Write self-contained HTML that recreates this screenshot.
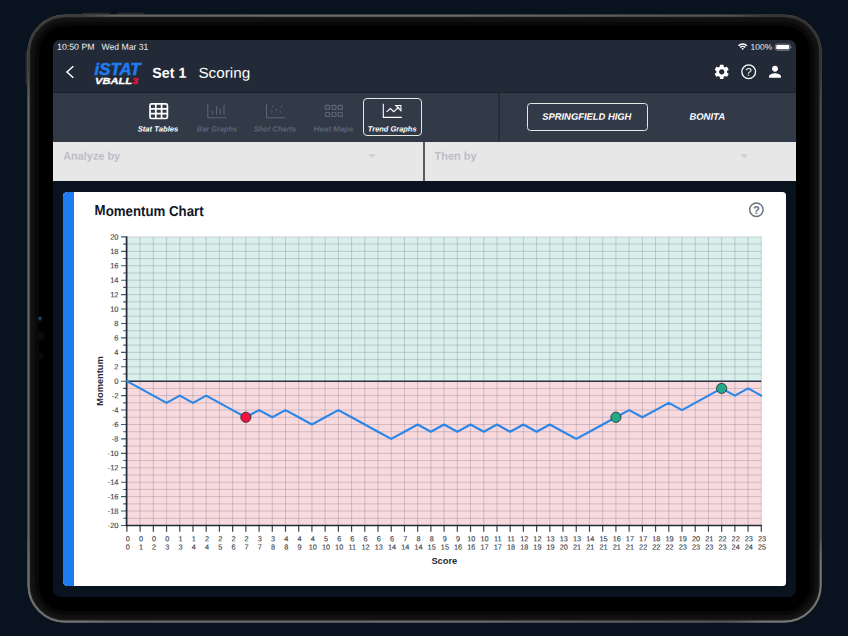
<!DOCTYPE html>
<html lang="en"><head><meta charset="utf-8"><title>iStat VBall 3 - Momentum Chart</title>
<style>
*{box-sizing:border-box;margin:0;padding:0}
html,body{width:848px;height:636px;overflow:hidden;background:#09121f;font-family:"Liberation Sans",sans-serif}
.abs{position:absolute}
#stage{position:relative;width:848px;height:636px;background:#09121f;overflow:hidden}
.btn{position:absolute;background:#2b2b2d;border-radius:1.5px}
#device{position:absolute;left:28px;top:15px;width:794px;height:607px;border-radius:37px;background:linear-gradient(135deg,#2c2c2e 0%,#3a3a3c 40%,#6a6a6c 75%,#7a7a7c 100%)}
#bezel{position:absolute;left:1.6px;top:1.6px;right:1.6px;bottom:1.6px;border-radius:35.5px;background:#000;box-shadow:inset 0 0 9px 3px rgba(70,70,72,0.55)}
#bezel2{position:absolute;left:10px;top:10px;right:10px;bottom:10px;border-radius:27px;background:#000;box-shadow:0 0 6px 3px #000}
#screen{position:absolute;left:52.7px;top:39.8px;width:743px;height:557px;border-radius:7px;background:#09131f;overflow:hidden}
#hdr{position:absolute;left:0;top:0;width:743px;height:52.6px;background:#232a37}
#hdrline{position:absolute;left:0;top:52.2px;width:743px;height:1px;background:#19212d}
#tb{position:absolute;left:0;top:53.1px;width:743px;height:48.9px;background:#323a48}
#flt{position:absolute;left:0;top:102px;width:743px;height:39.1px;background:#e7e7e7}
.st{position:absolute;color:#eef0f3;font-size:8.6px;line-height:10px;white-space:nowrap}
.ttl{position:absolute;color:#fff;font-size:14px;line-height:16px;white-space:nowrap}
.tl{position:absolute;font-size:7.6px;line-height:9px;font-weight:bold;font-style:italic;white-space:nowrap;text-align:center;transform:translateX(-50%)}
.on{color:#fff}.off{color:#566070}
.team{position:absolute;color:#fff;font-size:9.3px;font-weight:bold;font-style:italic;line-height:11px;white-space:nowrap;transform:translateX(-50%)}
.fl{position:absolute;color:#bdc0c6;font-size:10.9px;font-weight:bold;line-height:13px;white-space:nowrap}
#card{position:absolute;left:10.7px;top:152.2px;width:722.8px;height:394.2px;background:#fff;border-radius:4.5px 3.5px 3.5px 4.5px;overflow:hidden}
#band{position:absolute;left:0;top:0;width:10.6px;height:100%;background:#1f7cf0}
#ct{position:absolute;left:31.9px;top:10.6px;font-size:14.5px;font-weight:bold;color:#111827;line-height:17px;white-space:nowrap}
svg{position:absolute;left:0;top:0;overflow:visible}
.yl text{font-size:7.5px;fill:#363e4b;stroke:#363e4b;stroke-width:0.12px;text-anchor:end}
.xl text{font-size:7.3px;fill:#363e4b;stroke:#363e4b;stroke-width:0.12px;text-anchor:middle}
.axt{font-size:9.3px;font-weight:bold;fill:#1f2937}
</style></head><body>
<div id="stage">
<svg class="dev" width="848" height="636" viewBox="0 0 848 636">
<defs>
<linearGradient id="rimg" x1="0" y1="0" x2="1" y2="0"><stop offset="0" stop-color="#646464"/><stop offset="0.5" stop-color="#6c6c6c"/><stop offset="1" stop-color="#4c4c4c"/></linearGradient>
<linearGradient id="tlg" x1="0" y1="0" x2="1" y2="0"><stop offset="0" stop-color="#3b3b3b" stop-opacity="0"/><stop offset="0.25" stop-color="#3b3b3b" stop-opacity="1"/><stop offset="0.6" stop-color="#3b3b3b" stop-opacity="1"/><stop offset="1" stop-color="#3b3b3b" stop-opacity="0"/></linearGradient>
<clipPath id="devclip"><rect x="27.2" y="14.2" width="795" height="608.8" rx="38"/></clipPath>
<filter id="blur5" x="-5%" y="-5%" width="110%" height="110%"><feGaussianBlur stdDeviation="5.5"/></filter>
</defs>
<!-- hardware buttons -->
<rect x="82" y="12.8" width="28" height="4" rx="1.2" fill="#2c2c2e"/>
<rect x="117" y="12.8" width="28" height="4" rx="1.2" fill="#2c2c2e"/>
<rect x="25.6" y="51" width="4" height="34" rx="1.2" fill="#2c2c2e"/>
<!-- body -->
<rect x="27.2" y="14.2" width="795" height="608.8" rx="38" fill="#000"/>
<g clip-path="url(#devclip)">
<rect x="27.2" y="14.2" width="795" height="608.8" rx="38" fill="none" stroke="#242424" stroke-width="12" filter="url(#blur5)"/>
</g>
<rect x="28.500" y="15.700" width="792.2" height="606" rx="36.700" fill="none" stroke="url(#rimg)" stroke-width="2.300"/>
<!-- darker, thicker top corners -->
<path d="M28.700 100V52.600A36.700 36.700 0 0 1 65.400 15.900H120" fill="none" stroke="#3a3a3a" stroke-width="2.500" opacity="0.95" mask="url(#mtl)"/>
<path d="M820.500 100V52.600A36.700 36.700 0 0 0 783.800 15.900H730" fill="none" stroke="#343434" stroke-width="2.400" opacity="0.95" mask="url(#mtr)"/>
<defs>
<radialGradient id="rtl" cx="48" cy="35" r="70" gradientUnits="userSpaceOnUse"><stop offset="0.55" stop-color="#fff"/><stop offset="1" stop-color="#000"/></radialGradient>
<radialGradient id="rtr" cx="801" cy="35" r="70" gradientUnits="userSpaceOnUse"><stop offset="0.55" stop-color="#fff"/><stop offset="1" stop-color="#000"/></radialGradient>
<mask id="mtl" maskUnits="userSpaceOnUse" x="0" y="0" width="200" height="200"><rect x="0" y="0" width="200" height="200" fill="url(#rtl)"/></mask>
<mask id="mtr" maskUnits="userSpaceOnUse" x="650" y="0" width="198" height="200"><rect x="650" y="0" width="198" height="200" fill="url(#rtr)"/></mask>
</defs>
<path d="M28.500 540V585A36.700 36.700 0 0 0 65.200 621.700H120" fill="none" stroke="#6e6e6e" stroke-width="1.700" mask="url(#mbl)"/>
<path d="M820.700 540V585A36.700 36.700 0 0 1 784 621.700H730" fill="none" stroke="#767676" stroke-width="1.700" mask="url(#mbr)"/>
<defs>
<radialGradient id="rbl" cx="48" cy="602" r="75" gradientUnits="userSpaceOnUse"><stop offset="0.55" stop-color="#fff"/><stop offset="1" stop-color="#000"/></radialGradient>
<radialGradient id="rbr" cx="801" cy="602" r="75" gradientUnits="userSpaceOnUse"><stop offset="0.55" stop-color="#fff"/><stop offset="1" stop-color="#000"/></radialGradient>
<mask id="mbl" maskUnits="userSpaceOnUse" x="0" y="436" width="200" height="200"><rect x="0" y="436" width="200" height="200" fill="url(#rbl)"/></mask>
<mask id="mbr" maskUnits="userSpaceOnUse" x="650" y="436" width="198" height="200"><rect x="650" y="436" width="198" height="200" fill="url(#rbr)"/></mask>
</defs>
<!-- camera -->
<circle cx="40" cy="318.500" r="2.900" fill="#0c1418"/>
<circle cx="40" cy="318.500" r="1.150" fill="#1a6a86"/>
<circle cx="40" cy="336.500" r="4.600" fill="#0a0a0a"/>
<circle cx="40" cy="355.500" r="3.600" fill="#090909"/>
</svg>

<div id="screen">
 <div id="hdr"></div><div id="hdrline"></div><div id="tb"></div><div id="flt"></div>
 <div class="abs" style="left:310.3px;top:58.1px;width:59.1px;height:38.1px;border:1.7px solid #e6e6e6;border-radius:4px"></div>
 <div class="abs" style="left:445.8px;top:52.8px;width:1.2px;height:49.2px;background:#272e3a"></div>
 <div class="abs" style="left:474.1px;top:63.4px;width:120.9px;height:27.9px;border:1.7px solid #e6e6e6;border-radius:3.5px"></div>
 <div class="abs" style="left:370.7px;top:102px;width:1.3px;height:39.1px;background:#555a64"></div>
 <div id="card"><div id="band"></div></div>
</div>
<svg class="icons" width="848" height="636" viewBox="0 0 848 636">
<!-- back chevron -->
<path d="M73.3 66.3L67 72.05L73.3 77.8" fill="none" stroke="#fff" stroke-width="1.5" stroke-linecap="butt" stroke-linejoin="miter"/>
<!-- logo -->
<text x="94.6" y="74.7" font-size="16.9" font-weight="bold" font-style="italic" fill="#1f7cf0" stroke="#1f7cf0" stroke-width="0.55" textLength="46" lengthAdjust="spacingAndGlyphs">iSTAT</text>
<text x="95" y="83.9" font-size="9.8" font-weight="bold" font-style="italic" fill="#fff" stroke="#fff" stroke-width="0.3" textLength="43.2" lengthAdjust="spacingAndGlyphs">VBALL<tspan fill="#f0143c" stroke="#f0143c">3</tspan></text>
<!-- status icons: wifi -->
<g fill="none" stroke="#fff" stroke-linecap="butt">
<path d="M738.5 45.7A5.9 5.9 0 0 1 746.9 45.7" stroke-width="1.5"/>
<path d="M740.1 47.5A3.7 3.7 0 0 1 745.3 47.5" stroke-width="1.4"/>
</g>
<path d="M741.5 48.7A1.7 1.7 0 0 1 743.9 48.7L742.7 50.1Z" fill="#fff"/>
<!-- battery -->
<rect x="775.2" y="44.100" width="15" height="6.200" rx="1.900" fill="none" stroke="#8d939d" stroke-width="0.750"/>
<rect x="776.2" y="45.050" width="13" height="4.300" rx="1" fill="#fff"/>
<path d="M790.7 46.2v2.1c.6-.2.8-.6.8-1.05s-.2-.85-.8-1.050z" fill="#9aa0a8"/>
<!-- gear -->
<g transform="translate(712.8 62.9) scale(0.742)" fill="#fff">
<path d="M19.14 12.94c.04-.3.06-.61.06-.94 0-.32-.02-.64-.07-.94l2.030-1.580c.18-.14.23-.41.12-.61l-1.920-3.320c-.12-.22-.37-.29-.59-.22l-2.390.96c-.5-.38-1.030-.7-1.620-.94l-.36-2.540c-.04-.24-.24-.41-.48-.41h-3.840c-.24 0-.43.17-.47.41l-.36 2.540c-.59.24-1.130.57-1.620.94l-2.390-.96c-.22-.08-.47 0-.59.22L2.740 8.870c-.12.21-.08.47.12.61l2.030 1.580c-.05.3-.09.63-.09.94s.02.64.07.94l-2.030 1.580c-.18.14-.23.41-.12.61l1.920 3.320c.12.22.37.29.59.22l2.390-.96c.5.38 1.030.7 1.620.94l.36 2.540c.05.24.24.41.48.41h3.840c.24 0 .44-.17.47-.41l.36-2.540c.59-.24 1.130-.56 1.620-.94l2.390.96c.22.08.47 0 .59-.22l1.920-3.320c.12-.22.07-.47-.12-.61l-2.010-1.580zM12 15.600c-1.980 0-3.600-1.620-3.600-3.600s1.620-3.600 3.600-3.600 3.600 1.620 3.600 3.600-1.620 3.600-3.600 3.600z"/>
</g>
<!-- help -->
<circle cx="748.7" cy="71.8" r="6.85" fill="none" stroke="#fff" stroke-width="1.3"/>
<text x="748.7" y="75.800" font-size="11.200" transform="rotate(0.03 748.7 75.8)" fill="#fff" text-anchor="middle">?</text>
<!-- person -->
<g transform="translate(766.1 62.9) scale(0.742)" fill="#fff">
<path d="M12 12c2.210 0 4-1.790 4-4s-1.790-4-4-4-4 1.790-4 4 1.790 4 4 4zm0 2c-2.670 0-8 1.340-8 4v2h16v-2c0-2.660-5.330-4-8-4z"/>
</g>
<!-- stat tables -->
<g fill="none" stroke="#fff" stroke-width="1.7">
<rect x="150" y="103.9" width="17.4" height="14.6" rx="1.6"/>
<path d="M155.8 103.9v14.600M161.600 103.9v14.600M150 108.8h17.400M150 113.700h17.400"/>
</g>
<!-- bar graphs -->
<g fill="none" stroke="#5c6575" stroke-width="1">
<path d="M207.8 103.700V117.800H226.700"/>
<path d="M212.500 110.700V114.500M216.600 106V114.500M220.300 108.400V114.500M224 104.800V114.500" stroke-width="1.1"/>
</g>
<!-- shot charts -->
<path d="M266.500 103.700V117.800H285" fill="none" stroke="#5c6575" stroke-width="1"/>
<g fill="#5c6575">
<rect x="272.300" y="105.700" width="1.400" height="1.400"/><rect x="280.800" y="105.700" width="1.400" height="1.400"/><rect x="275.800" y="109.100" width="1.400" height="1.400"/><rect x="271.100" y="111.200" width="1.400" height="1.400"/><rect x="279.600" y="111.200" width="1.400" height="1.400"/>
</g>
<!-- heat maps -->
<g fill="none" stroke="#5c6575" stroke-width="1.2">
<rect x="325.500" y="105.400" width="4" height="4" rx="0.5"/><rect x="332" y="105.400" width="4" height="4" rx="0.5"/><rect x="338.300" y="105.400" width="4" height="4" rx="0.5"/>
<rect x="325.500" y="112.500" width="4" height="4" rx="0.5"/><rect x="332" y="112.500" width="4" height="4" rx="0.5"/><rect x="338.300" y="112.500" width="4" height="4" rx="0.5"/>
</g>
<!-- trend graphs -->
<g fill="none" stroke="#fff" stroke-width="1.1">
<path d="M383.300 103.700V117.400H401.900"/>
<path d="M386.600 111.900L390.400 108.600L393.700 111.700L399.200 106.900"/>
<path d="M395.800 105.500H400.900V110.600Z" stroke-width="1.1" stroke-linejoin="miter"/>
</g>
<!-- dropdown arrows -->
<path d="M367.900 154.300h8l-4 4.200z" fill="#cdd0d5"/>
<path d="M740.200 154.300h8l-4 4.200z" fill="#cdd0d5"/>
<!-- card help -->
<circle cx="756.400" cy="209.700" r="6.700" fill="none" stroke="#6b7280" stroke-width="1.450"/>
<text x="756.400" y="213.900" font-size="11.300" font-weight="bold" fill="#6b7280" text-anchor="middle" transform="rotate(0.03 756.4 213.9)">?</text>
</svg>

<svg class="txt" width="848" height="636" viewBox="0 0 848 636">
<text id="s1" x="57.0" y="49.8" font-size="8.6" font-weight="normal" font-style="normal" text-anchor="start" fill="#eef0f3" textLength="37.6" lengthAdjust="spacingAndGlyphs" transform="rotate(0.03 57.0 49.8)">10:50 PM</text>
<text id="s2" x="101.5" y="49.8" font-size="8.6" font-weight="normal" font-style="normal" text-anchor="start" fill="#eef0f3" textLength="46.8" lengthAdjust="spacingAndGlyphs" transform="rotate(0.03 101.5 49.8)">Wed Mar 31</text>
<text id="s3" x="772.2" y="49.8" font-size="8.3" font-weight="normal" font-style="normal" text-anchor="end" fill="#eef0f3" textLength="21.6" lengthAdjust="spacingAndGlyphs" transform="rotate(0.03 772.2 49.8)">100%</text>
<text id="t1" x="152.3" y="77.8" font-size="14.4" font-weight="bold" font-style="normal" text-anchor="start" fill="#fff" textLength="34" lengthAdjust="spacingAndGlyphs" transform="rotate(0.03 152.3 77.8)">Set 1</text>
<text id="t2" x="198.4" y="77.8" font-size="14.4" font-weight="normal" font-style="normal" text-anchor="start" fill="#fff" textLength="51.8" lengthAdjust="spacingAndGlyphs" transform="rotate(0.03 198.4 77.8)">Scoring</text>
<text id="l1" x="158" y="131.6" font-size="7.6" font-weight="bold" font-style="italic" text-anchor="middle" fill="#fff" textLength="40.6" lengthAdjust="spacingAndGlyphs" transform="rotate(0.03 158 131.6)">Stat Tables</text>
<text id="l2" x="216.9" y="131.6" font-size="7.6" font-weight="bold" font-style="italic" text-anchor="middle" fill="#5c6575" textLength="40.2" lengthAdjust="spacingAndGlyphs" transform="rotate(0.03 216.9 131.6)">Bar Graphs</text>
<text id="l3" x="275" y="131.6" font-size="7.6" font-weight="bold" font-style="italic" text-anchor="middle" fill="#5c6575" textLength="42.6" lengthAdjust="spacingAndGlyphs" transform="rotate(0.03 275 131.6)">Shot Charts</text>
<text id="l4" x="333.5" y="131.6" font-size="7.6" font-weight="bold" font-style="italic" text-anchor="middle" fill="#5c6575" textLength="39.6" lengthAdjust="spacingAndGlyphs" transform="rotate(0.03 333.5 131.6)">Heat Maps</text>
<text id="l5" x="392.2" y="131.6" font-size="7.6" font-weight="bold" font-style="italic" text-anchor="middle" fill="#fff" textLength="48.7" lengthAdjust="spacingAndGlyphs" transform="rotate(0.03 392.2 131.6)">Trend Graphs</text>
<text id="m1" x="586.8" y="119.8" font-size="9.3" font-weight="bold" font-style="italic" text-anchor="middle" fill="#fff" textLength="89.2" lengthAdjust="spacingAndGlyphs" transform="rotate(0.03 586.8 119.8)">SPRINGFIELD HIGH</text>
<text id="m2" x="707.2" y="119.8" font-size="9.3" font-weight="bold" font-style="italic" text-anchor="middle" fill="#fff" textLength="35.6" lengthAdjust="spacingAndGlyphs" transform="rotate(0.03 707.2 119.8)">BONITA</text>
<text id="f1" x="63.2" y="159.7" font-size="11.4" font-weight="bold" font-style="normal" text-anchor="start" fill="#bbbec7" textLength="57" lengthAdjust="spacingAndGlyphs" transform="rotate(0.03 63.2 159.7)">Analyze by</text>
<text id="f2" x="434.6" y="159.7" font-size="11.4" font-weight="bold" font-style="normal" text-anchor="start" fill="#bbbec7" textLength="42" lengthAdjust="spacingAndGlyphs" transform="rotate(0.03 434.6 159.7)">Then by</text>
<text id="c1" x="94.6" y="215.5" font-size="14.5" font-weight="bold" font-style="normal" text-anchor="start" fill="#111827" textLength="109" lengthAdjust="spacingAndGlyphs" transform="rotate(0.03 94.6 215.5)">Momentum Chart</text>
</svg>
<svg class="chart" width="848" height="636" viewBox="0 0 848 636">
<rect x="126.90" y="236.90" width="634.40" height="144.30" fill="#d9efeb"/>
<rect x="126.90" y="381.20" width="634.40" height="144.30" fill="#f7d9de"/>
<path d="M140.12 236.90V525.50M153.33 236.90V525.50M166.55 236.90V525.50M179.77 236.90V525.50M192.98 236.90V525.50M206.20 236.90V525.50M219.42 236.90V525.50M232.63 236.90V525.50M245.85 236.90V525.50M259.07 236.90V525.50M272.28 236.90V525.50M285.50 236.90V525.50M298.72 236.90V525.50M311.93 236.90V525.50M325.15 236.90V525.50M338.37 236.90V525.50M351.58 236.90V525.50M364.80 236.90V525.50M378.02 236.90V525.50M391.23 236.90V525.50M404.45 236.90V525.50M417.67 236.90V525.50M430.88 236.90V525.50M444.10 236.90V525.50M457.32 236.90V525.50M470.53 236.90V525.50M483.75 236.90V525.50M496.97 236.90V525.50M510.18 236.90V525.50M523.40 236.90V525.50M536.62 236.90V525.50M549.83 236.90V525.50M563.05 236.90V525.50M576.27 236.90V525.50M589.48 236.90V525.50M602.70 236.90V525.50M615.92 236.90V525.50M629.13 236.90V525.50M642.35 236.90V525.50M655.57 236.90V525.50M668.78 236.90V525.50M682.00 236.90V525.50M695.22 236.90V525.50M708.43 236.90V525.50M721.65 236.90V525.50M734.87 236.90V525.50M748.08 236.90V525.50M761.30 236.90V525.50M126.90 518.29H761.30M126.90 511.07H761.30M126.90 503.86H761.30M126.90 496.64H761.30M126.90 489.43H761.30M126.90 482.21H761.30M126.90 475.00H761.30M126.90 467.78H761.30M126.90 460.57H761.30M126.90 453.35H761.30M126.90 446.13H761.30M126.90 438.92H761.30M126.90 431.71H761.30M126.90 424.49H761.30M126.90 417.28H761.30M126.90 410.06H761.30M126.90 402.85H761.30M126.90 395.63H761.30M126.90 388.42H761.30M126.90 373.99H761.30M126.90 366.77H761.30M126.90 359.56H761.30M126.90 352.34H761.30M126.90 345.12H761.30M126.90 337.91H761.30M126.90 330.70H761.30M126.90 323.48H761.30M126.90 316.26H761.30M126.90 309.05H761.30M126.90 301.84H761.30M126.90 294.62H761.30M126.90 287.41H761.30M126.90 280.19H761.30M126.90 272.98H761.30M126.90 265.76H761.30M126.90 258.55H761.30M126.90 251.33H761.30M126.90 244.12H761.30M126.90 236.90H761.30" stroke="#1f2937" stroke-opacity="0.19" stroke-width="0.95" fill="none"/>
<path d="M121 525.50H126.90M121 511.07H126.90M121 496.64H126.90M121 482.21H126.90M121 467.78H126.90M121 453.35H126.90M121 438.92H126.90M121 424.49H126.90M121 410.06H126.90M121 395.63H126.90M121 381.20H126.90M121 366.77H126.90M121 352.34H126.90M121 337.91H126.90M121 323.48H126.90M121 309.05H126.90M121 294.62H126.90M121 280.19H126.90M121 265.76H126.90M121 251.33H126.90M121 236.90H126.90M123.2 518.29H126.90M123.2 503.86H126.90M123.2 489.43H126.90M123.2 475.00H126.90M123.2 460.57H126.90M123.2 446.13H126.90M123.2 431.71H126.90M123.2 417.28H126.90M123.2 402.85H126.90M123.2 388.42H126.90M123.2 373.99H126.90M123.2 359.56H126.90M123.2 345.12H126.90M123.2 330.70H126.90M123.2 316.26H126.90M123.2 301.84H126.90M123.2 287.41H126.90M123.2 272.98H126.90M123.2 258.55H126.90M123.2 244.12H126.90" stroke="#4b5563" stroke-width="1.1" fill="none"/>
<path d="M126.90 525.50V531.7M140.12 525.50V531.7M153.33 525.50V531.7M166.55 525.50V531.7M179.77 525.50V531.7M192.98 525.50V531.7M206.20 525.50V531.7M219.42 525.50V531.7M232.63 525.50V531.7M245.85 525.50V531.7M259.07 525.50V531.7M272.28 525.50V531.7M285.50 525.50V531.7M298.72 525.50V531.7M311.93 525.50V531.7M325.15 525.50V531.7M338.37 525.50V531.7M351.58 525.50V531.7M364.80 525.50V531.7M378.02 525.50V531.7M391.23 525.50V531.7M404.45 525.50V531.7M417.67 525.50V531.7M430.88 525.50V531.7M444.10 525.50V531.7M457.32 525.50V531.7M470.53 525.50V531.7M483.75 525.50V531.7M496.97 525.50V531.7M510.18 525.50V531.7M523.40 525.50V531.7M536.62 525.50V531.7M549.83 525.50V531.7M563.05 525.50V531.7M576.27 525.50V531.7M589.48 525.50V531.7M602.70 525.50V531.7M615.92 525.50V531.7M629.13 525.50V531.7M642.35 525.50V531.7M655.57 525.50V531.7M668.78 525.50V531.7M682.00 525.50V531.7M695.22 525.50V531.7M708.43 525.50V531.7M721.65 525.50V531.7M734.87 525.50V531.7M748.08 525.50V531.7M761.30 525.50V531.7" stroke="#374151" stroke-width="1.2" fill="none"/>
<path d="M126.60 236.60V526.20" stroke="#1f2937" stroke-width="1.7" fill="none"/>
<path d="M125.80 525.50H761.90" stroke="#1f2937" stroke-width="1.5" fill="none"/>
<path d="M126.90 381.20H761.30" stroke="#2a3142" stroke-width="1.4" fill="none"/>
<g class="yl">
<text x="118.5" y="528.10" transform="rotate(0.03 118.5 528.10)">-20</text>
<text x="118.5" y="513.67" transform="rotate(0.03 118.5 513.67)">-18</text>
<text x="118.5" y="499.24" transform="rotate(0.03 118.5 499.24)">-16</text>
<text x="118.5" y="484.81" transform="rotate(0.03 118.5 484.81)">-14</text>
<text x="118.5" y="470.38" transform="rotate(0.03 118.5 470.38)">-12</text>
<text x="118.5" y="455.95" transform="rotate(0.03 118.5 455.95)">-10</text>
<text x="118.5" y="441.52" transform="rotate(0.03 118.5 441.52)">-8</text>
<text x="118.5" y="427.09" transform="rotate(0.03 118.5 427.09)">-6</text>
<text x="118.5" y="412.66" transform="rotate(0.03 118.5 412.66)">-4</text>
<text x="118.5" y="398.23" transform="rotate(0.03 118.5 398.23)">-2</text>
<text x="118.5" y="383.80" transform="rotate(0.03 118.5 383.80)">0</text>
<text x="118.5" y="369.37" transform="rotate(0.03 118.5 369.37)">2</text>
<text x="118.5" y="354.94" transform="rotate(0.03 118.5 354.94)">4</text>
<text x="118.5" y="340.51" transform="rotate(0.03 118.5 340.51)">6</text>
<text x="118.5" y="326.08" transform="rotate(0.03 118.5 326.08)">8</text>
<text x="118.5" y="311.65" transform="rotate(0.03 118.5 311.65)">10</text>
<text x="118.5" y="297.22" transform="rotate(0.03 118.5 297.22)">12</text>
<text x="118.5" y="282.79" transform="rotate(0.03 118.5 282.79)">14</text>
<text x="118.5" y="268.36" transform="rotate(0.03 118.5 268.36)">16</text>
<text x="118.5" y="253.93" transform="rotate(0.03 118.5 253.93)">18</text>
<text x="118.5" y="239.50" transform="rotate(0.03 118.5 239.50)">20</text>
</g>
<g class="xl">
<text x="127.70" y="541.3" transform="rotate(0.03 127.70 541.3)">0</text><text x="127.70" y="549.5" transform="rotate(0.03 127.70 549.5)">0</text>
<text x="140.92" y="541.3" transform="rotate(0.03 140.92 541.3)">0</text><text x="140.92" y="549.5" transform="rotate(0.03 140.92 549.5)">1</text>
<text x="154.13" y="541.3" transform="rotate(0.03 154.13 541.3)">0</text><text x="154.13" y="549.5" transform="rotate(0.03 154.13 549.5)">2</text>
<text x="167.35" y="541.3" transform="rotate(0.03 167.35 541.3)">0</text><text x="167.35" y="549.5" transform="rotate(0.03 167.35 549.5)">3</text>
<text x="180.57" y="541.3" transform="rotate(0.03 180.57 541.3)">1</text><text x="180.57" y="549.5" transform="rotate(0.03 180.57 549.5)">3</text>
<text x="193.78" y="541.3" transform="rotate(0.03 193.78 541.3)">1</text><text x="193.78" y="549.5" transform="rotate(0.03 193.78 549.5)">4</text>
<text x="207.00" y="541.3" transform="rotate(0.03 207.00 541.3)">2</text><text x="207.00" y="549.5" transform="rotate(0.03 207.00 549.5)">4</text>
<text x="220.22" y="541.3" transform="rotate(0.03 220.22 541.3)">2</text><text x="220.22" y="549.5" transform="rotate(0.03 220.22 549.5)">5</text>
<text x="233.43" y="541.3" transform="rotate(0.03 233.43 541.3)">2</text><text x="233.43" y="549.5" transform="rotate(0.03 233.43 549.5)">6</text>
<text x="246.65" y="541.3" transform="rotate(0.03 246.65 541.3)">2</text><text x="246.65" y="549.5" transform="rotate(0.03 246.65 549.5)">7</text>
<text x="259.87" y="541.3" transform="rotate(0.03 259.87 541.3)">3</text><text x="259.87" y="549.5" transform="rotate(0.03 259.87 549.5)">7</text>
<text x="273.08" y="541.3" transform="rotate(0.03 273.08 541.3)">3</text><text x="273.08" y="549.5" transform="rotate(0.03 273.08 549.5)">8</text>
<text x="286.30" y="541.3" transform="rotate(0.03 286.30 541.3)">4</text><text x="286.30" y="549.5" transform="rotate(0.03 286.30 549.5)">8</text>
<text x="299.52" y="541.3" transform="rotate(0.03 299.52 541.3)">4</text><text x="299.52" y="549.5" transform="rotate(0.03 299.52 549.5)">9</text>
<text x="312.73" y="541.3" transform="rotate(0.03 312.73 541.3)">4</text><text x="312.73" y="549.5" transform="rotate(0.03 312.73 549.5)">10</text>
<text x="325.95" y="541.3" transform="rotate(0.03 325.95 541.3)">5</text><text x="325.95" y="549.5" transform="rotate(0.03 325.95 549.5)">10</text>
<text x="339.17" y="541.3" transform="rotate(0.03 339.17 541.3)">6</text><text x="339.17" y="549.5" transform="rotate(0.03 339.17 549.5)">10</text>
<text x="352.38" y="541.3" transform="rotate(0.03 352.38 541.3)">6</text><text x="352.38" y="549.5" transform="rotate(0.03 352.38 549.5)">11</text>
<text x="365.60" y="541.3" transform="rotate(0.03 365.60 541.3)">6</text><text x="365.60" y="549.5" transform="rotate(0.03 365.60 549.5)">12</text>
<text x="378.82" y="541.3" transform="rotate(0.03 378.82 541.3)">6</text><text x="378.82" y="549.5" transform="rotate(0.03 378.82 549.5)">13</text>
<text x="392.03" y="541.3" transform="rotate(0.03 392.03 541.3)">6</text><text x="392.03" y="549.5" transform="rotate(0.03 392.03 549.5)">14</text>
<text x="405.25" y="541.3" transform="rotate(0.03 405.25 541.3)">7</text><text x="405.25" y="549.5" transform="rotate(0.03 405.25 549.5)">14</text>
<text x="418.47" y="541.3" transform="rotate(0.03 418.47 541.3)">8</text><text x="418.47" y="549.5" transform="rotate(0.03 418.47 549.5)">14</text>
<text x="431.68" y="541.3" transform="rotate(0.03 431.68 541.3)">8</text><text x="431.68" y="549.5" transform="rotate(0.03 431.68 549.5)">15</text>
<text x="444.90" y="541.3" transform="rotate(0.03 444.90 541.3)">9</text><text x="444.90" y="549.5" transform="rotate(0.03 444.90 549.5)">15</text>
<text x="458.12" y="541.3" transform="rotate(0.03 458.12 541.3)">9</text><text x="458.12" y="549.5" transform="rotate(0.03 458.12 549.5)">16</text>
<text x="471.33" y="541.3" transform="rotate(0.03 471.33 541.3)">10</text><text x="471.33" y="549.5" transform="rotate(0.03 471.33 549.5)">16</text>
<text x="484.55" y="541.3" transform="rotate(0.03 484.55 541.3)">10</text><text x="484.55" y="549.5" transform="rotate(0.03 484.55 549.5)">17</text>
<text x="497.77" y="541.3" transform="rotate(0.03 497.77 541.3)">11</text><text x="497.77" y="549.5" transform="rotate(0.03 497.77 549.5)">17</text>
<text x="510.98" y="541.3" transform="rotate(0.03 510.98 541.3)">11</text><text x="510.98" y="549.5" transform="rotate(0.03 510.98 549.5)">18</text>
<text x="524.20" y="541.3" transform="rotate(0.03 524.20 541.3)">12</text><text x="524.20" y="549.5" transform="rotate(0.03 524.20 549.5)">18</text>
<text x="537.42" y="541.3" transform="rotate(0.03 537.42 541.3)">12</text><text x="537.42" y="549.5" transform="rotate(0.03 537.42 549.5)">19</text>
<text x="550.63" y="541.3" transform="rotate(0.03 550.63 541.3)">13</text><text x="550.63" y="549.5" transform="rotate(0.03 550.63 549.5)">19</text>
<text x="563.85" y="541.3" transform="rotate(0.03 563.85 541.3)">13</text><text x="563.85" y="549.5" transform="rotate(0.03 563.85 549.5)">20</text>
<text x="577.07" y="541.3" transform="rotate(0.03 577.07 541.3)">13</text><text x="577.07" y="549.5" transform="rotate(0.03 577.07 549.5)">21</text>
<text x="590.28" y="541.3" transform="rotate(0.03 590.28 541.3)">14</text><text x="590.28" y="549.5" transform="rotate(0.03 590.28 549.5)">21</text>
<text x="603.50" y="541.3" transform="rotate(0.03 603.50 541.3)">15</text><text x="603.50" y="549.5" transform="rotate(0.03 603.50 549.5)">21</text>
<text x="616.72" y="541.3" transform="rotate(0.03 616.72 541.3)">16</text><text x="616.72" y="549.5" transform="rotate(0.03 616.72 549.5)">21</text>
<text x="629.93" y="541.3" transform="rotate(0.03 629.93 541.3)">17</text><text x="629.93" y="549.5" transform="rotate(0.03 629.93 549.5)">21</text>
<text x="643.15" y="541.3" transform="rotate(0.03 643.15 541.3)">17</text><text x="643.15" y="549.5" transform="rotate(0.03 643.15 549.5)">22</text>
<text x="656.37" y="541.3" transform="rotate(0.03 656.37 541.3)">18</text><text x="656.37" y="549.5" transform="rotate(0.03 656.37 549.5)">22</text>
<text x="669.58" y="541.3" transform="rotate(0.03 669.58 541.3)">19</text><text x="669.58" y="549.5" transform="rotate(0.03 669.58 549.5)">22</text>
<text x="682.80" y="541.3" transform="rotate(0.03 682.80 541.3)">19</text><text x="682.80" y="549.5" transform="rotate(0.03 682.80 549.5)">23</text>
<text x="696.02" y="541.3" transform="rotate(0.03 696.02 541.3)">20</text><text x="696.02" y="549.5" transform="rotate(0.03 696.02 549.5)">23</text>
<text x="709.23" y="541.3" transform="rotate(0.03 709.23 541.3)">21</text><text x="709.23" y="549.5" transform="rotate(0.03 709.23 549.5)">23</text>
<text x="722.45" y="541.3" transform="rotate(0.03 722.45 541.3)">22</text><text x="722.45" y="549.5" transform="rotate(0.03 722.45 549.5)">23</text>
<text x="735.67" y="541.3" transform="rotate(0.03 735.67 541.3)">22</text><text x="735.67" y="549.5" transform="rotate(0.03 735.67 549.5)">24</text>
<text x="748.88" y="541.3" transform="rotate(0.03 748.88 541.3)">23</text><text x="748.88" y="549.5" transform="rotate(0.03 748.88 549.5)">24</text>
<text x="762.10" y="541.3" transform="rotate(0.03 762.10 541.3)">23</text><text x="762.10" y="549.5" transform="rotate(0.03 762.10 549.5)">25</text>
</g>
<polyline points="126.90,381.20 140.12,388.42 153.33,395.63 166.55,402.85 179.77,395.63 192.98,402.85 206.20,395.63 219.42,402.85 232.63,410.06 245.85,417.28 259.07,410.06 272.28,417.28 285.50,410.06 298.72,417.28 311.93,424.49 325.15,417.28 338.37,410.06 351.58,417.28 364.80,424.49 378.02,431.71 391.23,438.92 404.45,431.71 417.67,424.49 430.88,431.71 444.10,424.49 457.32,431.71 470.53,424.49 483.75,431.71 496.97,424.49 510.18,431.71 523.40,424.49 536.62,431.71 549.83,424.49 563.05,431.71 576.27,438.92 589.48,431.71 602.70,424.49 615.92,417.28 629.13,410.06 642.35,417.28 655.57,410.06 668.78,402.85 682.00,410.06 695.22,402.85 708.43,395.63 721.65,388.42 734.87,395.63 748.08,388.42 761.30,395.63" fill="none" stroke="#2b86e8" stroke-width="2.1" stroke-linejoin="round" stroke-linecap="round"/>
<circle cx="245.85" cy="417.28" r="5.1" fill="#f0143c" stroke="#33343c" stroke-width="0.9"/>
<circle cx="615.92" cy="417.28" r="5.1" fill="#21aa86" stroke="#33343c" stroke-width="0.9"/>
<circle cx="721.65" cy="388.42" r="5.1" fill="#21aa86" stroke="#33343c" stroke-width="0.9"/>
<text class="axt" x="444.3" y="564.3" text-anchor="middle">Score</text>
<text class="axt" transform="translate(102.6 381) rotate(-90)" text-anchor="middle">Momentum</text>
</svg>
</div>
</body></html>
